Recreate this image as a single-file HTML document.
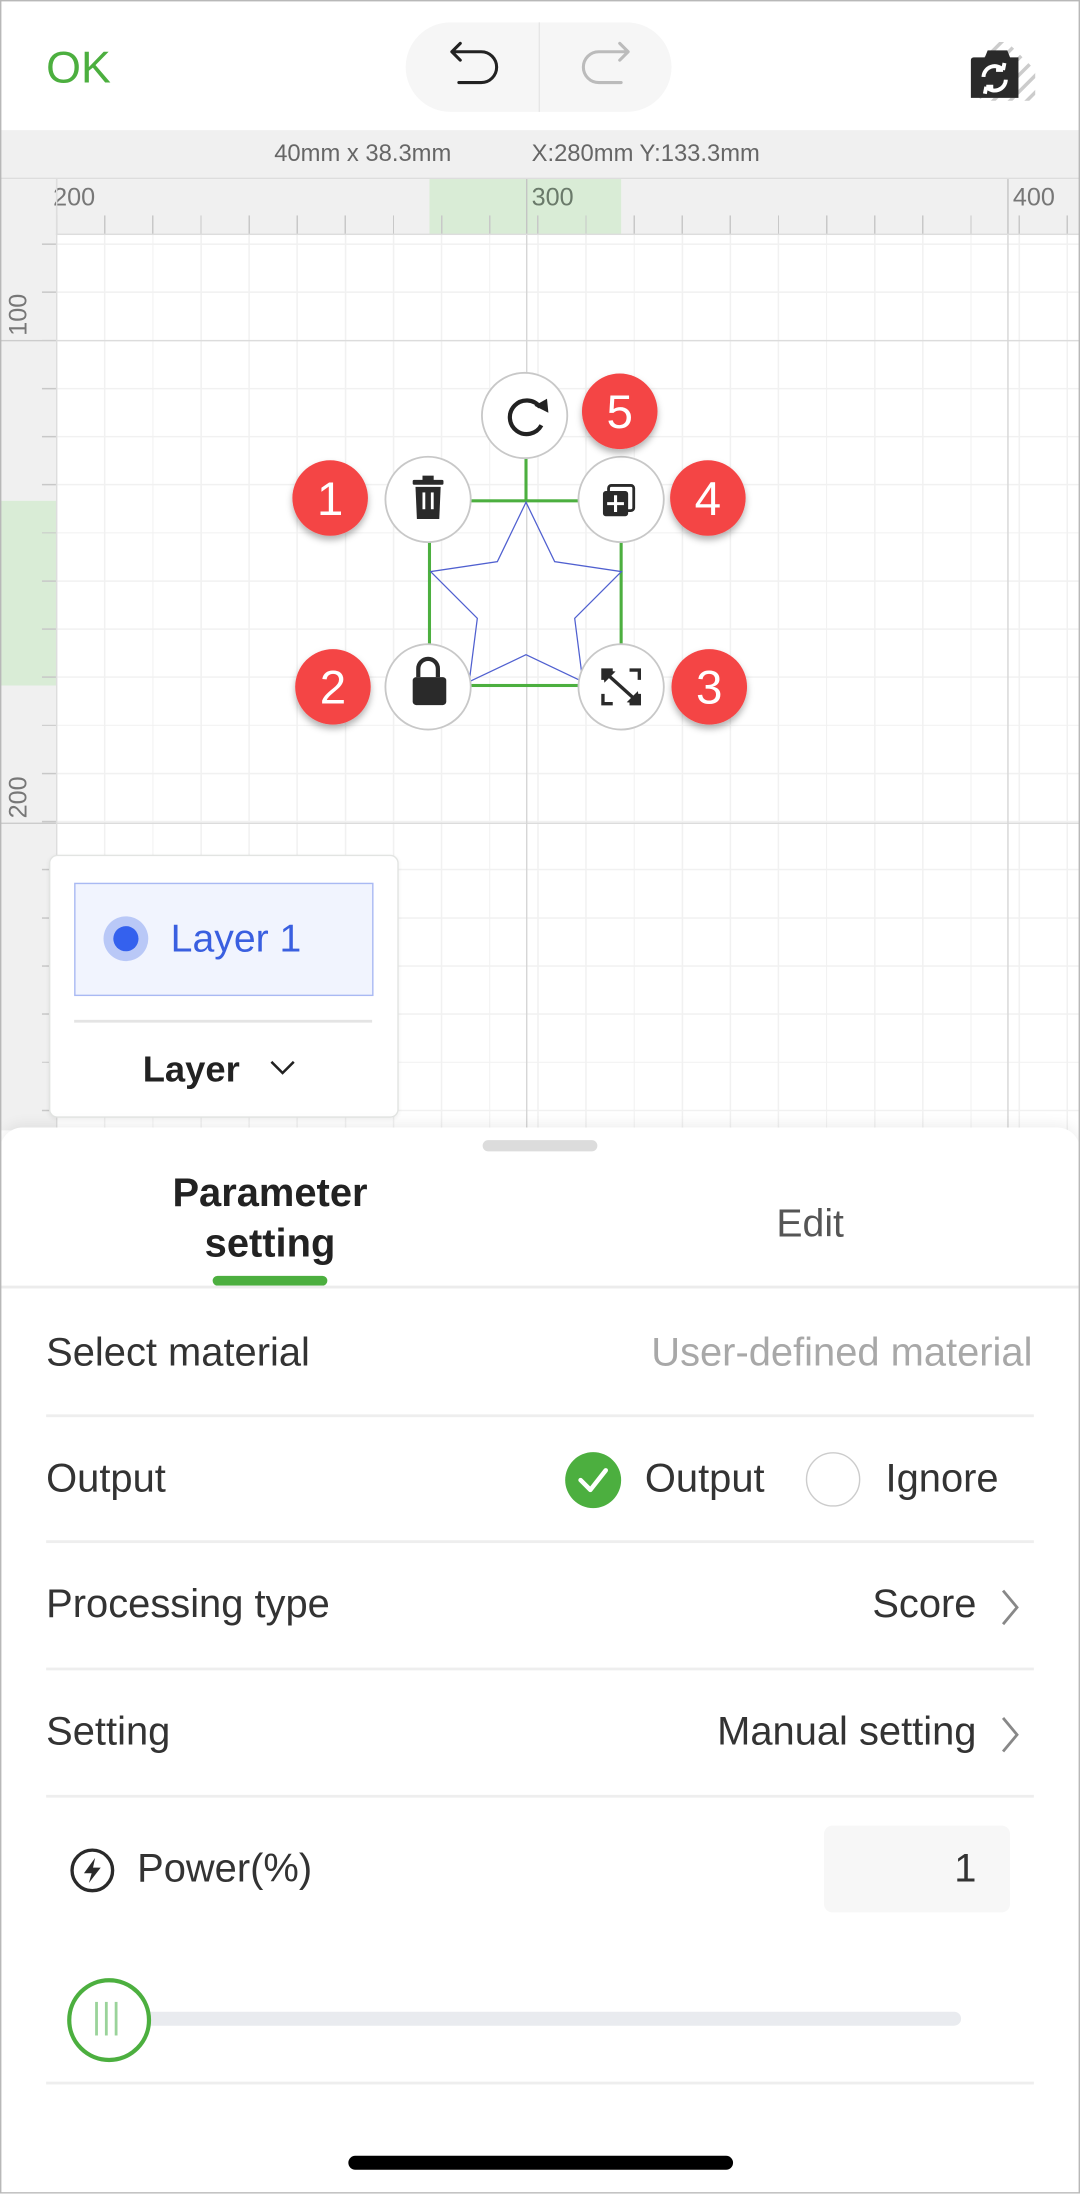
<!DOCTYPE html>
<html><head><meta charset="utf-8">
<style>
html,body{margin:0;padding:0;background:#fff;}
body{width:1080px;height:2194px;overflow:hidden;position:relative;font-family:"Liberation Sans",Arial,sans-serif;}
#f{position:absolute;left:0;top:0;width:772px;height:1568px;transform:scale(1.39896);transform-origin:0 0;overflow:hidden;background:#fff;}
.a{position:absolute;}
.t{position:absolute;white-space:nowrap;}
.r{font-size:28.5px;color:#333;}
</style></head><body>
<div id="f">
  <!-- header -->
  <div class="t" style="left:33px;top:30px;font-size:32px;color:#4caf3f;">OK</div>
  <div class="a" style="left:290px;top:16px;width:190px;height:64px;border-radius:32px;background:#f6f6f6;"></div>
  <div class="a" style="left:385px;top:16px;width:1px;height:64px;background:#e6e6e6;"></div>
  <svg class="a" style="left:318px;top:26px" width="44" height="40" viewBox="0 0 44 40">
    <path d="M11 5 L5 11 L11 17 M5 11 H26 A8 8 0 0 1 26 33 H10" fill="none" stroke="#222" stroke-width="2.2" stroke-linecap="round" stroke-linejoin="round"/>
  </svg>
  <svg class="a" style="left:410px;top:26px" width="44" height="40" viewBox="0 0 44 40">
    <path d="M33 5 L39 11 L33 17 M39 11 H18 A8 8 0 0 0 18 33 H34" fill="none" stroke="#bbb" stroke-width="2.2" stroke-linecap="round" stroke-linejoin="round"/>
  </svg>
  <svg class="a" style="left:688px;top:28px" width="54" height="46" viewBox="0 0 54 46">
    <defs><clipPath id="hc"><rect x="10" y="2" width="42" height="42"/></clipPath></defs>
    <g clip-path="url(#hc)" stroke="#ccc" stroke-width="2.5">
      <path d="M0 30 L30 0 M6 36 L36 6 M12 42 L42 12 M18 48 L48 18 M24 54 L54 24 M30 60 L60 30 M36 66 L66 36"/>
    </g>
    <path d="M8 13 H16 L18 8 H32 L34 13 H40 V42 H6 V15 A2 2 0 0 1 8 13Z" fill="#2a2a2a"/>
    <path d="M15 27 A8 8 0 0 1 29 22 M29 22 L30 17 M29 22 L24 22" fill="none" stroke="#fff" stroke-width="2.8"/>
    <path d="M31 29 A8 8 0 0 1 17 34 M17 34 L16 39 M17 34 L22 34" fill="none" stroke="#fff" stroke-width="2.8"/>
  </svg>

  <!-- info bar -->
  <div class="a" style="left:0;top:93px;width:772px;height:35px;background:#f0f0f0;"></div>
  <div class="t" style="left:196px;top:100px;font-size:17px;color:#666;">40mm x 38.3mm</div>
  <div class="t" style="left:380px;top:100px;font-size:17px;color:#666;">X:280mm Y:133.3mm</div>
  <div class="a" style="left:0;top:127px;width:772px;height:1px;background:#ddd;"></div>

  <!-- canvas -->
  <div class="a" style="left:40px;top:168px;width:732px;height:640px;background-color:#fff;
    background-image:repeating-linear-gradient(90deg,#f1f1f1 0 1px,transparent 1px 34.4px),repeating-linear-gradient(180deg,#f1f1f1 0 1px,transparent 1px 34.4px);
    background-position:0 6px;"></div>
  <div class="a" style="left:40px;top:243px;width:732px;height:1px;background:#dcdcdc;"></div>
  <div class="a" style="left:40px;top:588px;width:732px;height:1px;background:#dcdcdc;"></div>
  <div class="a" style="left:376px;top:128px;width:1px;height:680px;background:#d6d6d6;"></div>
  <div class="a" style="left:720px;top:128px;width:1px;height:680px;background:#d6d6d6;"></div>

  <!-- top ruler -->
  <div class="a" style="left:0;top:128px;width:772px;height:40px;background:#f0f0f0;"></div>
  <div class="a" style="left:307px;top:128px;width:137px;height:40px;background:#d9ecd6;"></div>
  <div class="a" style="left:40px;top:154px;width:732px;height:14px;background-image:repeating-linear-gradient(90deg,#c8c8c8 0 1px,transparent 1px 34.4px);"></div>
  <div class="a" style="left:40px;top:128px;width:1px;height:40px;background:#ccc;"></div>
  <div class="a" style="left:376px;top:128px;width:1px;height:40px;background:#c4c4c4;"></div>
  <div class="a" style="left:720px;top:128px;width:1px;height:40px;background:#c4c4c4;"></div>
  <div class="a" style="left:40px;top:167px;width:732px;height:1px;background:#ddd;"></div>
  <div class="t" style="left:38px;top:131px;font-size:18px;color:#777;">200</div>
  <div class="t" style="left:380px;top:131px;font-size:18px;color:#6a7a6a;">300</div>
  <div class="t" style="left:724px;top:131px;font-size:18px;color:#777;">400</div>

  <!-- left ruler -->
  <div class="a" style="left:0;top:168px;width:40px;height:640px;background:#f0f0f0;"></div>
  <div class="a" style="left:0;top:358px;width:40px;height:132px;background:#d9ecd6;"></div>
  <div class="a" style="left:30px;top:168px;width:10px;height:640px;background-image:repeating-linear-gradient(180deg,#c8c8c8 0 1px,transparent 1px 34.4px);background-position:0 6px;"></div>
  <div class="a" style="left:0;top:243px;width:40px;height:1px;background:#ccc;"></div>
  <div class="a" style="left:0;top:588px;width:40px;height:1px;background:#ccc;"></div>
  <div class="a" style="left:40px;top:128px;width:1px;height:680px;background:#ddd;"></div>
  <div class="t" style="font-size:18px;color:#777;transform:rotate(-90deg);transform-origin:0 0;top:240px;left:3px;">100</div>
  <div class="t" style="left:3px;top:585px;font-size:18px;color:#777;transform:rotate(-90deg);transform-origin:0 0;">200</div>

  <!-- selection -->
  <svg class="a" style="left:0;top:0" width="772" height="820" viewBox="0 0 772 820">
    <defs>
      <filter id="sh" x="-30%" y="-30%" width="160%" height="170%"><feDropShadow dx="0" dy="3" stdDeviation="2.5" flood-color="#000" flood-opacity="0.3"/></filter>
    </defs>
    <g stroke="#4caf3f" stroke-width="2.2" fill="none">
      <rect x="307" y="358" width="137" height="132"/>
      <line x1="376" y1="320" x2="376" y2="358"/>
    </g>
    <polygon points="376,359 355.5,401.5 307.8,408.6 341.2,442 335.4,487.3 376,468 416.6,487.3 410.8,442 444.2,408.6 396.5,401.5" fill="none" stroke="#5060d0" stroke-width="0.9"/>
    <g fill="#fff" stroke="#c8c8c8" stroke-width="1.3">
      <circle cx="375" cy="297" r="30.5"/>
      <circle cx="306" cy="357" r="30.5"/>
      <circle cx="444" cy="357" r="30.5"/>
      <circle cx="306" cy="491" r="30.5"/>
      <circle cx="444" cy="491" r="30.5"/>
    </g>
    <!-- rotate -->
    <path d="M386 291 A12 12 0 1 0 387 304" fill="none" stroke="#222" stroke-width="3"/>
    <path d="M382 290 L391 285 L392 295 Z" fill="#222"/>
    <!-- trash -->
    <rect x="295" y="343" width="22" height="3.5" rx="1" fill="#2a2a2a"/>
    <rect x="302" y="340" width="8" height="4" fill="#2a2a2a"/>
    <path d="M297 348 H315 L314 371 H298 Z" fill="#2a2a2a"/>
    <rect x="302" y="352" width="2" height="12" fill="#fff"/><rect x="308" y="352" width="2" height="12" fill="#fff"/>
    <!-- duplicate -->
    <rect x="435" y="347" width="18" height="18" rx="2" fill="none" stroke="#2a2a2a" stroke-width="2"/>
    <rect x="431" y="351" width="18" height="18" rx="2" fill="#2a2a2a"/>
    <path d="M440 354 V366 M434 360 H446" stroke="#fff" stroke-width="2.2"/>
    <!-- lock -->
    <path d="M299 484 V478 A7 7 0 0 1 313 478 V484" fill="none" stroke="#2a2a2a" stroke-width="3"/>
    <rect x="295" y="484" width="24" height="20" rx="2.5" fill="#2a2a2a"/>
    <!-- scale -->
    <g fill="none" stroke="#2a2a2a" stroke-width="2.4">
      <path d="M431 486 V479 H438 M450 479 H457 V486 M457 496 V503 H450 M438 503 H431 V496"/>
      <path d="M434 482 L454 500"/>
    </g>
    <path d="M431 479 L440 480 L432 488 Z M457 503 L448 502 L456 494 Z" fill="#2a2a2a"/>
    <!-- badges -->
    <g filter="url(#sh)" fill="#f44444">
      <circle cx="236" cy="356" r="27"/>
      <circle cx="506" cy="356" r="27"/>
      <circle cx="238" cy="491" r="27"/>
      <circle cx="507" cy="491" r="27"/>
      <circle cx="443" cy="294" r="27"/>
    </g>
    <g fill="#fff" font-family="Liberation Sans, Arial, sans-serif" font-size="34" text-anchor="middle">
      <text x="236" y="368">1</text>
      <text x="506" y="368">4</text>
      <text x="238" y="503">2</text>
      <text x="507" y="503">3</text>
      <text x="443" y="306">5</text>
    </g>
  </svg>

  <!-- layer panel -->
  <div class="a" style="left:35px;top:611px;width:248px;height:186px;background:#fff;border:1.5px solid #e2e4e2;border-radius:6px;box-shadow:0 1px 3px rgba(0,0,0,0.06);"></div>
  <div class="a" style="left:53px;top:631px;width:212px;height:79px;background:#f1f4fe;border:1.2px solid #a9b9f3;"></div>
  <div class="a" style="left:74px;top:655px;width:32px;height:32px;border-radius:50%;background:#b9c8f7;"></div>
  <div class="a" style="left:81px;top:662px;width:18px;height:18px;border-radius:50%;background:#3461ee;"></div>
  <div class="t" style="left:122px;top:655px;font-size:28px;color:#3a5fe0;">Layer 1</div>
  <div class="a" style="left:53px;top:729px;width:213px;height:2px;background:#e4e4e4;"></div>
  <div class="t" style="left:102px;top:749px;font-size:26px;font-weight:bold;color:#222;">Layer</div>
  <svg class="a" style="left:191px;top:756px" width="22" height="14" viewBox="0 0 22 14"><path d="M3 3 L11 11 L19 3" fill="none" stroke="#222" stroke-width="1.8"/></svg>

  <!-- bottom sheet -->
  <div class="a" style="left:0;top:806px;width:772px;height:780px;background:#fff;border-radius:16px 16px 0 0;box-shadow:0 -2px 10px rgba(0,0,0,0.07);"></div>
  <div class="a" style="left:345px;top:815px;width:82px;height:8px;border-radius:4px;background:#dcdcdc;"></div>
  <div class="a" style="left:83px;top:835px;width:220px;text-align:center;font-size:28.5px;font-weight:bold;color:#222;line-height:36px;">Parameter<br>setting</div>
  <div class="a" style="left:152px;top:912px;width:82px;height:7px;border-radius:4px;background:#4caf3f;"></div>
  <div class="t" style="left:555px;top:859px;font-size:28px;color:#555;">Edit</div>
  <div class="a" style="left:0;top:919px;width:772px;height:2px;background:#ececec;"></div>

  <div class="t r" style="left:33px;top:951px;">Select material</div>
  <div class="t r" style="right:34px;top:951px;color:#a8a8a8;">User-defined material</div>
  <div class="a" style="left:33px;top:1011px;width:706px;height:1.5px;background:#eee;"></div>

  <div class="t r" style="left:33px;top:1041px;">Output</div>
  <div class="a" style="left:404px;top:1038px;width:40px;height:40px;border-radius:50%;background:#4caf3f;"></div>
  <svg class="a" style="left:404px;top:1038px" width="40" height="40" viewBox="0 0 40 40"><path d="M11 20 L18 27 L29 13" fill="none" stroke="#fff" stroke-width="3.2" stroke-linecap="round" stroke-linejoin="round"/></svg>
  <div class="t r" style="left:461px;top:1041px;">Output</div>
  <div class="a" style="left:576px;top:1038px;width:37px;height:37px;border-radius:50%;border:1.8px solid #ccc;"></div>
  <div class="t r" style="left:633px;top:1041px;">Ignore</div>
  <div class="a" style="left:33px;top:1101px;width:706px;height:1.5px;background:#eee;"></div>

  <div class="t r" style="left:33px;top:1131px;">Processing type</div>
  <div class="t r" style="right:74px;top:1131px;">Score</div>
  <svg class="a" style="left:712px;top:1134px" width="20" height="30" viewBox="0 0 20 30"><path d="M5 3 L15 15 L5 27" fill="none" stroke="#888" stroke-width="2"/></svg>
  <div class="a" style="left:33px;top:1192px;width:706px;height:1.5px;background:#eee;"></div>

  <div class="t r" style="left:33px;top:1222px;">Setting</div>
  <div class="t r" style="right:74px;top:1222px;">Manual setting</div>
  <svg class="a" style="left:712px;top:1225px" width="20" height="30" viewBox="0 0 20 30"><path d="M5 3 L15 15 L5 27" fill="none" stroke="#888" stroke-width="2"/></svg>
  <div class="a" style="left:33px;top:1283px;width:706px;height:1.5px;background:#eee;"></div>

  <svg class="a" style="left:49px;top:1320px" width="34" height="34" viewBox="0 0 34 34">
    <circle cx="17" cy="17" r="14.5" fill="none" stroke="#2a2a2a" stroke-width="2.4"/>
    <path d="M19 8 L11 19 H16.5 L14.5 26 L23 15 H17.5 Z" fill="#2a2a2a"/>
  </svg>
  <div class="t r" style="left:98px;top:1320px;">Power(%)</div>
  <div class="a" style="left:589px;top:1305px;width:133px;height:62px;border-radius:6px;background:#f7f7f7;"></div>
  <div class="t r" style="right:74px;top:1320px;">1</div>

  <div class="a" style="left:75px;top:1438px;width:612px;height:10px;border-radius:5px;background:#e9ebef;"></div>
  <div class="a" style="left:48px;top:1414px;width:54px;height:54px;border-radius:50%;background:#fff;border:3.5px solid #4caf3f;"></div>
  <div class="a" style="left:68px;top:1431px;width:2px;height:24px;background:#9ad39a;"></div>
  <div class="a" style="left:75px;top:1431px;width:2px;height:24px;background:#9ad39a;"></div>
  <div class="a" style="left:82px;top:1431px;width:2px;height:24px;background:#9ad39a;"></div>
  <div class="a" style="left:33px;top:1488px;width:706px;height:1.5px;background:#eee;"></div>

  <div class="a" style="left:249px;width:275px;height:10px;border-radius:5px;background:#000;top:1541px;"></div>

  <!-- frame border -->
  <div class="a" style="left:0;top:0;width:770px;height:1566px;border:1px solid #b8b8b8;"></div>
</div>
</body></html>
